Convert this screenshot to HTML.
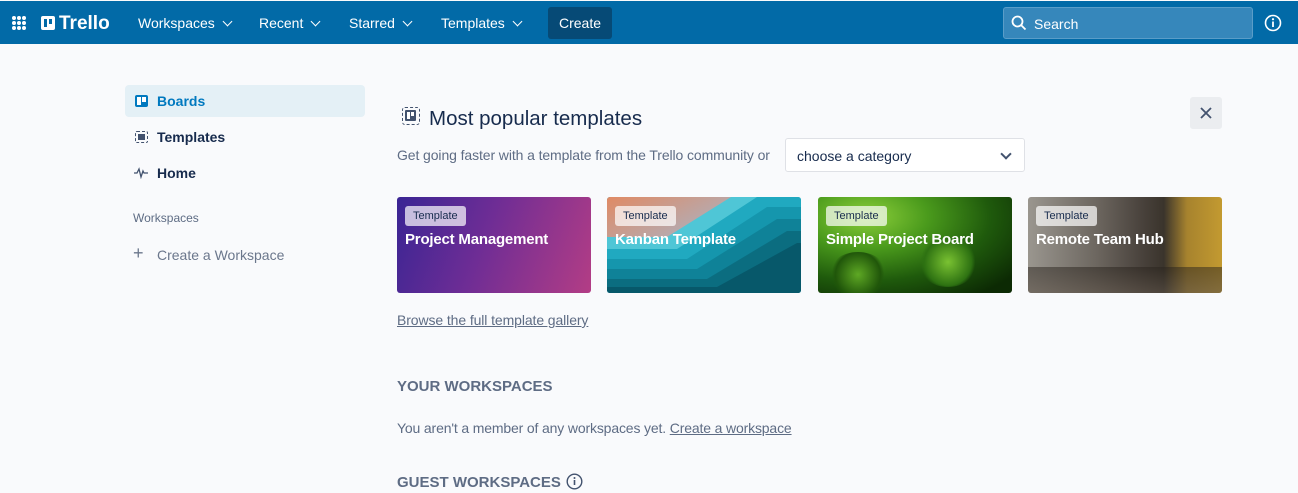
<!DOCTYPE html>
<html><head><style>
*{box-sizing:border-box;margin:0;padding:0}
body{width:1298px;height:493px;overflow:hidden;background:#f9fafc;font-family:"Liberation Sans",sans-serif;position:relative;color:#172b4d}
.hdr{position:absolute;left:0;top:1px;width:1298px;height:43px;background:#026aa7;color:#fff}
.a{position:absolute}
.nav{font-size:14px;top:14px;color:#fff}
.chev{display:inline-block;width:7px;height:7px;border-right:1.5px solid #fff;border-bottom:1.5px solid #fff;transform:rotate(45deg);margin-left:9px;position:relative;top:-3px}
.card{position:absolute;top:197px;width:194px;height:96px;border-radius:3px;overflow:hidden}
.tag{position:absolute;left:8px;top:9px;height:20px;padding:0 8px;font-size:11px;line-height:20px;color:#172b4d;background:rgba(255,255,255,.7);border-radius:3px}
.ct{position:absolute;left:8px;top:34px;font-size:15px;font-weight:bold;color:#fff;letter-spacing:-0.2px}
.side{font-size:14px;font-weight:bold;color:#172b4d}
</style></head><body>
<div class="hdr">
 <div class="a" style="left:12px;top:15px;width:14px;height:14px;display:grid;grid-template-columns:repeat(3,4px);gap:1px">
  <i style="background:#fff;border-radius:50%"></i><i style="background:#fff;border-radius:50%"></i><i style="background:#fff;border-radius:50%"></i><i style="background:#fff;border-radius:50%"></i><i style="background:#fff;border-radius:50%"></i><i style="background:#fff;border-radius:50%"></i><i style="background:#fff;border-radius:50%"></i><i style="background:#fff;border-radius:50%"></i><i style="background:#fff;border-radius:50%"></i></div>
 <div class="a" style="left:41px;top:15px;width:14px;height:14px;background:#fff;border-radius:2px"><i style="position:absolute;left:3px;top:3px;width:3px;height:8px;background:#026aa7"></i><i style="position:absolute;left:8px;top:3px;width:3px;height:5px;background:#026aa7"></i></div>
 <div class="a" style="left:59px;top:12px;font-size:19px;font-weight:bold">Trello</div>
 <div class="a nav" style="left:138px">Workspaces<span class="chev"></span></div>
 <div class="a nav" style="left:259px">Recent<span class="chev"></span></div>
 <div class="a nav" style="left:349px">Starred<span class="chev"></span></div>
 <div class="a nav" style="left:441px">Templates<span class="chev"></span></div>
 <div class="a" style="left:548px;top:6px;width:64px;height:32px;background:#064a76;border-radius:3px;font-size:14px;line-height:32px;text-align:center">Create</div>
 <div class="a" style="left:1003px;top:6px;width:250px;height:32px;background:#3687bb;border:1px solid #5a9dc8;border-radius:3px"></div>
 <svg class="a" style="left:1011px;top:14px" width="16" height="16" viewBox="0 0 16 16"><circle cx="6.5" cy="6.5" r="5" fill="none" stroke="#fff" stroke-width="1.8"/><path d="M10 10l4.5 4.5" stroke="#fff" stroke-width="1.8"/></svg>
 <div class="a" style="left:1034px;top:15px;font-size:14px">Search</div>
 <svg class="a" style="left:1264px;top:13px" width="18" height="18" viewBox="0 0 18 18"><circle cx="9" cy="9" r="7.5" fill="none" stroke="#fff" stroke-width="1.6"/><rect x="8.1" y="7.5" width="1.8" height="5.5" fill="#fff"/><circle cx="9" cy="5.2" r="1.1" fill="#fff"/></svg>
</div>

<div class="a" style="left:125px;top:85px;width:240px;height:32px;background:#e4f0f6;border-radius:4px"></div>
<div class="a" style="left:135px;top:95px;width:13px;height:12px;background:#0079bf;border-radius:2px"><i style="position:absolute;left:2px;top:2px;width:4px;height:8px;background:#fff"></i><i style="position:absolute;left:7px;top:2px;width:4px;height:5px;background:#fff"></i></div>
<div class="a side" style="left:157px;top:93px;color:#0079bf">Boards</div>
<div class="a" style="left:135px;top:131px;width:13px;height:12px;border:1.5px dashed #42526e;border-radius:2px"><i style="position:absolute;left:1.5px;top:1.5px;width:7px;height:6px;background:#42526e"></i></div>
<div class="a side" style="left:157px;top:129px">Templates</div>
<svg class="a" style="left:134px;top:167px" width="14" height="12" viewBox="0 0 14 12"><path d="M0 6h3l2-4 2 8 2-6 1 2h4" fill="none" stroke="#42526e" stroke-width="1.3"/></svg>
<div class="a side" style="left:157px;top:165px">Home</div>
<div class="a" style="left:133px;top:211px;font-size:12px;color:#5e6c84">Workspaces</div>
<div class="a" style="left:133px;top:243px;font-size:18px;color:#6b778c;font-weight:300">+</div>
<div class="a" style="left:157px;top:247px;font-size:14px;color:#6b778c">Create a Workspace</div>

<div class="a" style="left:402px;top:107px;width:18px;height:18px;border:1.5px dashed #42526e;border-radius:3px"><i style="position:absolute;left:2px;top:2px;width:11px;height:11px;background:#42526e;border-radius:1px"></i><i style="position:absolute;left:4px;top:4px;width:3px;height:7px;background:#fff"></i><i style="position:absolute;left:8px;top:4px;width:3px;height:4px;background:#fff"></i></div>
<div class="a" style="left:429px;top:107px;font-size:20.5px;color:#172b4d">Most popular templates</div>
<div class="a" style="left:1190px;top:97px;width:32px;height:32px;background:#ebedf0;border-radius:3px"></div>
<svg class="a" style="left:1200px;top:107px" width="12" height="12"><path d="M1 1l10 10M11 1L1 11" stroke="#42526e" stroke-width="1.8"/></svg>
<div class="a" style="left:397px;top:147px;font-size:14px;color:#5e6c84;letter-spacing:-0.1px">Get going faster with a template from the Trello community or</div>
<div class="a" style="left:785px;top:138px;width:240px;height:34px;border:1px solid #dfe1e6;background:#fff;border-radius:3px;font-size:14px;line-height:34px;padding-left:11px;color:#172b4d">choose a category<span style="position:absolute;right:14px;top:11px;width:8px;height:8px;border-right:2px solid #42526e;border-bottom:2px solid #42526e;transform:rotate(45deg)"></span></div>

<div class="card" style="left:397px;background:linear-gradient(110deg,#3a2594 0%,#6f2d95 45%,#b33d85 100%)"><div class="tag">Template</div><div class="ct">Project Management</div></div>
<div class="card" style="left:607px;background:#0d8aa2">
 <svg width="194" height="96" style="position:absolute;left:0;top:0"><defs><linearGradient id="k" x1="0" y1="0" x2="1" y2="1"><stop offset="0" stop-color="#e08a64"/><stop offset=".5" stop-color="#a9b4c6"/><stop offset="1" stop-color="#22b3c7"/></linearGradient></defs>
 <rect width="194" height="96" fill="url(#k)"/>
 <path d="M0 40 L60 40 L140 -10 L200 -10 L200 96 L0 96Z" fill="#4fc6d6"/>
 <path d="M0 52 L70 52 L150 0 L200 0 L200 96 L0 96Z" fill="#20a9c0"/>
 <path d="M0 62 L80 62 L160 10 L200 10 L200 96 L0 96Z" fill="#1596ad"/>
 <path d="M0 72 L90 72 L170 22 L200 22 L200 96 L0 96Z" fill="#0f8298"/>
 <path d="M0 82 L100 82 L180 34 L200 34 L200 96 L0 96Z" fill="#0b6d80"/>
 <path d="M0 90 L110 90 L190 46 L200 46 L200 96 L0 96Z" fill="#07586a"/></svg>
 <div class="tag">Template</div><div class="ct">Kanban Template</div></div>
<div class="card" style="left:818px;background:radial-gradient(ellipse at 25% 20%,#8ccf3a,#4a9a1c 30%,#1f5a0c 60%,#0c2a04 90%),#1d4a0a">
 <div style="position:absolute;left:100px;top:40px;width:60px;height:50px;border-radius:50%;background:radial-gradient(circle,#7ac232,#2e7212 60%,transparent 70%)"></div>
 <div style="position:absolute;left:10px;top:55px;width:60px;height:45px;border-radius:50%;background:radial-gradient(circle,#5ea824,#20560a 60%,transparent 70%)"></div>
 <div class="tag">Template</div><div class="ct">Simple Project Board</div></div>
<div class="card" style="left:1028px;background:linear-gradient(90deg,#9a968f 0%,#6d6760 35%,#47403a 60%,#3a342c 70%,#a7832e 82%,#c39a30 100%)">
 <div style="position:absolute;left:0;top:70px;width:194px;height:26px;background:linear-gradient(180deg,rgba(40,34,28,.5),rgba(90,80,70,.6))"></div>
 <div class="tag">Template</div><div class="ct">Remote Team Hub</div></div>

<div class="a" style="left:397px;top:312px;font-size:14px;color:#5e6c84;text-decoration:underline;letter-spacing:-0.1px">Browse the full template gallery</div>
<div class="a" style="left:397px;top:378px;font-size:15px;font-weight:bold;color:#5e6c84">YOUR WORKSPACES</div>
<div class="a" style="left:397px;top:420px;font-size:14px;color:#5e6c84;letter-spacing:-0.15px">You aren't a member of any workspaces yet. <span style="text-decoration:underline">Create a workspace</span></div>
<div class="a" style="left:397px;top:474px;font-size:15px;font-weight:bold;color:#5e6c84">GUEST WORKSPACES</div>
<svg class="a" style="left:566px;top:473px" width="17" height="17"><circle cx="8.5" cy="8.5" r="7.3" fill="none" stroke="#42526e" stroke-width="1.4"/><rect x="7.7" y="7" width="1.6" height="5" fill="#42526e"/><circle cx="8.5" cy="5" r="1" fill="#42526e"/></svg>
</body></html>
